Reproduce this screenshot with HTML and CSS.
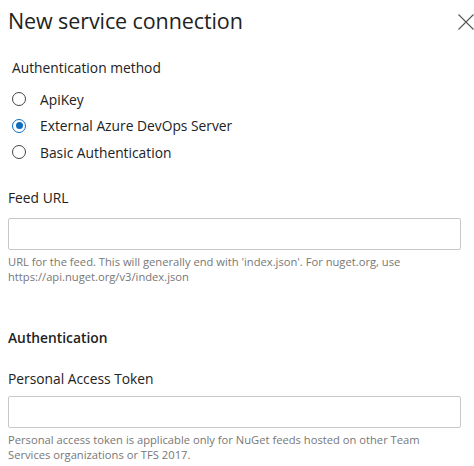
FILE: index.html
```html
<!DOCTYPE html>
<html>
<head>
<meta charset="utf-8">
<link rel="stylesheet" href="styles.css">
</head>
<body>
<div class="panel">
  <div class="header">
    <h1 class="title">New service connection</h1>
    <button class="close" aria-label="Close">
      <svg width="16" height="16" viewBox="0 0 16 16"><path d="M0.5 0.5 L15.5 15.5 M15.5 0.5 L0.5 15.5" stroke="#555" stroke-width="1.1" fill="none"/></svg>
    </button>
  </div>

  <div class="method">
    <div class="method-label">Authentication method</div>
    <div class="radios">
      <label class="radio"><span class="circle"></span><span>ApiKey</span></label>
      <label class="radio checked"><span class="circle"></span><span>External Azure DevOps Server</span></label>
      <label class="radio"><span class="circle"></span><span>Basic Authentication</span></label>
    </div>
  </div>

  <div class="field feed">
    <div class="field-label">Feed URL</div>
    <div class="input"></div>
    <div class="help">URL for the feed. This will generally end with 'index.json'. For nuget.org, use https://api.nuget.org/v3/index.json</div>
  </div>

  <div class="section-title">Authentication</div>

  <div class="field token">
    <div class="field-label">Personal Access Token</div>
    <div class="input"></div>
    <div class="help">Personal access token is applicable only for NuGet feeds hosted on other Team Services organizations or TFS 2017.</div>
  </div>
</div>
</body>
</html>
```

FILE: styles.css
```css
html, body {
  margin: 0;
  padding: 0;
  background: #ffffff;
}

body {
  font-family: "Open Sans", "Noto Sans", sans-serif;
  color: #222222;
}

.panel {
  padding: 5px 13px 0 8px;
}

.header {
  display: flex;
  justify-content: space-between;
  align-items: flex-start;
}

.title {
  margin: 0;
  font-size: 21.5px;
  font-weight: 400;
  line-height: 32px;
  letter-spacing: -0.1px;
}

.close {
  margin: 9px -13px 0 0;
  padding: 0;
  border: 0;
  background: none;
  width: 16px;
  height: 16px;
  display: flex;
}

.method {
  margin-top: 21px;
  padding-left: 4px;
}

.method-label {
  font-size: 13.8px;
  line-height: 20px;
}

.radios {
  margin-top: 8px;
  display: flex;
  flex-direction: column;
}

.radio {
  display: flex;
  align-items: center;
  gap: 14px;
  height: 26.5px;
  font-size: 13.8px;
}

.circle {
  width: 12px;
  height: 12px;
  border: 1.5px solid #444;
  border-radius: 50%;
  box-sizing: content-box;
  flex: none;
  position: relative;
}

.radio.checked .circle {
  border-color: #0f6cbd;
}

.radio.checked .circle::after {
  content: "";
  position: absolute;
  left: 2.5px;
  top: 2.5px;
  width: 7px;
  height: 7px;
  border-radius: 50%;
  background: #0f6cbd;
}

.field-label {
  font-size: 13.8px;
  line-height: 20px;
}

.feed {
  margin-top: 22px;
}

.input {
  margin-top: 10px;
  height: 30px;
  border: 1px solid #c8c8c8;
  border-radius: 2px;
}

.help {
  margin-top: 4px;
  font-size: 11.2px;
  line-height: 15.5px;
  color: #777777;
}

.section-title {
  margin-top: 43px;
  font-size: 13.8px;
  font-weight: 600;
  line-height: 20px;
}

.token {
  margin-top: 21px;
}

.token .input {
  margin-top: 7px;
}
```
